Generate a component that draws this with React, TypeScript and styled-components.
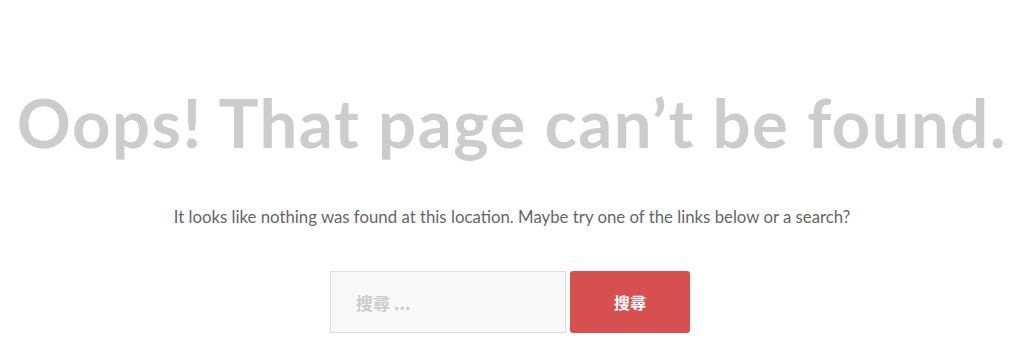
import React from 'react';
import styled, { createGlobalStyle } from 'styled-components';

const GlobalStyle = createGlobalStyle`
  html, body {
    margin: 0;
    padding: 0;
    background: #fff;
  }
`;

const Page = styled.main`
  width: 1024px;
  height: 362px;
  display: flex;
  flex-direction: column;
  align-items: center;
  overflow: hidden;
`;

const Title = styled.h1`
  margin: 82px 0 0;
  font-family: 'Lato', 'Liberation Sans', sans-serif;
  font-weight: 700;
  font-size: 67px;
  line-height: 80px;
  letter-spacing: 1.5px;
  color: #cccccc;
  white-space: nowrap;
`;

const Lead = styled.p`
  margin: 44px 0 0;
  font-family: 'Lato', 'Liberation Sans', sans-serif;
  font-size: 16.8px;
  line-height: 22px;
  color: #666;
`;

const SearchForm = styled.form`
  display: flex;
  gap: 4px;
  margin: 43px 4px 0 0;
`;

const SearchInput = styled.input`
  box-sizing: border-box;
  width: 236px;
  height: 62px;
  padding: 0 25px;
  border: 1px solid #dddddd;
  background: #f8f8f8;
  font-family: 'Noto Sans CJK TC', 'Noto Sans', sans-serif;
  font-size: 17px;
  font-weight: 700;
  color: #666;
  outline: none;
  &::placeholder {
    color: #cccccc;
  }
`;

const SearchButton = styled.button`
  width: 120px;
  height: 62px;
  border: none;
  border-radius: 3px;
  background: #d65050;
  color: #fff;
  font-family: 'Noto Sans CJK TC', 'Noto Sans', sans-serif;
  font-size: 16px;
  font-weight: 700;
  cursor: pointer;
`;

const App: React.FC = () => {
  return (
    <>
      <GlobalStyle />
      <Page>
        <Title>Oops! That page can’t be found.</Title>
        <Lead>
          It looks like nothing was found at this location. Maybe try one of the links below or a search?
        </Lead>
        <SearchForm onSubmit={(e) => e.preventDefault()}>
          <SearchInput type="search" placeholder="搜尋 ..." />
          <SearchButton type="submit">搜尋</SearchButton>
        </SearchForm>
      </Page>
    </>
  );
};

export default App;
